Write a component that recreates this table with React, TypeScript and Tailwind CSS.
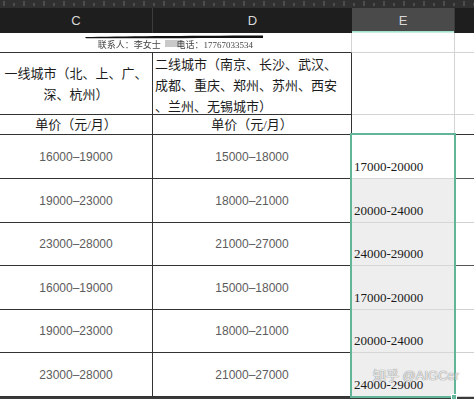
import React from 'react'

const dataRows = [
  { c: '16000–19000', d: '15000–18000', e: '17000-20000', h: 'h-[44px]', shade: false },
  { c: '19000–23000', d: '18000–21000', e: '20000-24000', h: 'h-[44px]', shade: true },
  { c: '23000–28000', d: '21000–27000', e: '24000-29000', h: 'h-[43px]', shade: true },
  { c: '16000–19000', d: '15000–18000', e: '17000-20000', h: 'h-[44px]', shade: true },
  { c: '19000–23000', d: '18000–21000', e: '20000-24000', h: 'h-[43px]', shade: true },
  { c: '23000–28000', d: '21000–27000', e: '24000-29000', h: 'h-[44px]', shade: true },
]

const serif = "font-['Liberation_Serif','Noto_Sans_CJK_SC',serif]"

function Ruler() {
  const ticks = Array.from({ length: 48 }, (_, i) => i * 10 + 4)
  return (
    <div className="h-[8px] bg-[#303030]">
      <svg width="474" height="8" className="block">
        {ticks.map((x, i) => (
          <line key={i} x1={x} x2={x} y1={i % 2 ? 3 : 1} y2={6} stroke="#6a6a6a" strokeWidth="1" />
        ))}
      </svg>
    </div>
  )
}

export default function App() {
  return (
    <div className="relative w-[474px] h-[399px] overflow-hidden bg-white font-['Liberation_Sans','Noto_Sans_CJK_SC',sans-serif]">
      <Ruler />

      {/* column letters */}
      <div className="flex h-[25px] bg-[#1e1e1e] text-[13px] text-[#d8d8d8]">
        <div className="w-[153px] border-r border-[#3c3c3c] flex items-center justify-center">C</div>
        <div className="w-[199px] flex items-center justify-center">D</div>
        <div className="relative w-[103px] bg-[#4a4a4a] border-r border-[#3c3c3c] flex items-center justify-center">
          E
          <div className="absolute left-0 right-0 bottom-0 h-[2px] bg-gradient-to-b from-[#8fdcc0] to-[#d9f3ea]" />
        </div>
        <div className="flex-1" />
      </div>

      {/* row 1: redacted contact line */}
      <div className="flex h-[20px]">
        <div className="relative w-[352px] border-r border-b border-b-[#333] border-r-[#d4d4d4] flex items-end justify-center pb-[2px]">
          <svg width="352" height="20" className="absolute left-0 top-0">
            <path d="M85 4 C120 3.2 180 2.6 263 2.4 L263 5 C190 5 130 5.4 86 5.2 Z" fill="#111" />
          </svg>
          <div className="absolute left-[165px] top-[7px] w-[18px] h-[7px] bg-[#c9c9c9]" />
          <div className={`${serif} text-[9px] leading-[10px] text-[#444] whitespace-nowrap blur-[0.6px]`}>
            联系人：李女士 &nbsp;&nbsp;&nbsp;&nbsp;&nbsp; 电话：17767033534
          </div>
        </div>
        <div className="w-[103px] border-r border-b border-[#d4d4d4]" />
        <div className="flex-1 border-b border-[#d4d4d4]" />
      </div>

      {/* row 2: city tiers */}
      <div className={`flex h-[62px] text-[13px] leading-[21px] text-[#1c1c1c] ${serif}`}>
        <div className="w-[153px] border-r border-b border-[#333] flex items-center justify-center text-center">
          <div>
            一线城市（北、上、广、
            <br />
            深、杭州）
          </div>
        </div>
        <div className="w-[199px] border-r border-b border-[#333] pl-[2px] pt-[1px]">
          二线城市（南京、长沙、武汉、
          <br />
          成都、重庆、郑州、苏州、西安
          <br />
          、兰州、无锡城市）
        </div>
        <div className="w-[103px] border-r border-b border-[#d4d4d4]" />
        <div className="flex-1 border-b border-[#d4d4d4]" />
      </div>

      {/* row 3: unit */}
      <div className={`flex h-[20px] text-[13px] text-[#1c1c1c] ${serif}`}>
        <div className="w-[153px] border-r border-b border-[#333] flex items-center justify-center">单价（元/月）</div>
        <div className="w-[199px] border-r border-b border-[#333] flex items-center justify-center">单价（元/月）</div>
        <div className="w-[103px] border-r border-b border-r-[#d4d4d4] border-b-[#333]" />
        <div className="flex-1 border-b border-[#333]" />
      </div>

      {/* data rows */}
      {dataRows.map((r, i) => (
        <div key={i} className={`flex ${r.h}`}>
          <div className="w-[153px] border-r border-b border-[#333] flex items-center justify-center text-[12px] text-[#5c5c5c]">
            {r.c}
          </div>
          <div className="w-[199px] border-r border-b border-[#333] flex items-center justify-center text-[12px] text-[#5c5c5c]">
            {r.d}
          </div>
          <div
            className={`w-[103px] border-r border-b border-[#d6d6d6] flex items-end pl-[2px] pb-[2px] ${serif} text-[13px] text-[#1a1a1a] ${
              r.shade ? 'bg-[#eeeeee]' : 'bg-white'
            }`}
          >
            {r.e}
          </div>
          <div className={`flex-1 border-b ${i === 0 || i === 2 ? 'border-[#555]' : 'border-[#d0d0d0]'}`} />
        </div>
      ))}
      <div className="h-[2px] bg-[#3a3a3a]" />

      {/* selection outline on column E */}
      <div className="absolute left-[350px] top-[133px] w-[106px] h-[265px] border-2 border-[#62b596]" />
      <div className="absolute left-[451px] top-[394px] w-[6px] h-[6px] bg-[#62b596] border border-white" />

      {/* watermark */}
      <div className="absolute left-[373px] top-[368px] text-[13px] leading-[16px] text-white/80 [text-shadow:0_0_1px_#8a8a8a,0_0_1px_#8a8a8a] whitespace-nowrap">
        知乎 @AIGCer
      </div>
    </div>
  )
}
